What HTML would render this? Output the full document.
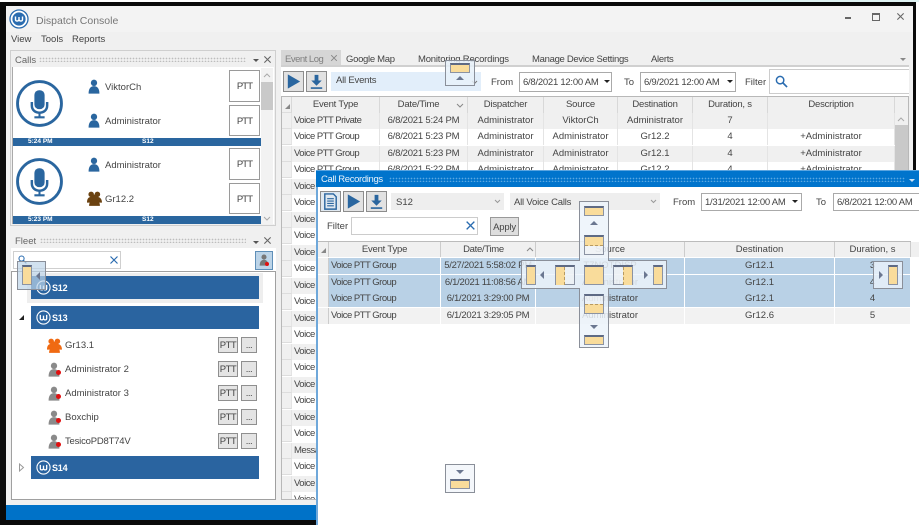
<!DOCTYPE html>
<html><head><meta charset="utf-8">
<style>
html,body{margin:0;padding:0;width:919px;height:525px;overflow:hidden;background:#fff}
#root{position:relative;width:919px;height:525px;overflow:hidden;background:#fff;font-family:"Liberation Sans",sans-serif;font-size:9.5px;color:#444;filter:blur(.35px)}
#root div,#root span.a,#root svg{position:absolute}
.t{position:absolute;white-space:nowrap;line-height:12px;transform:translateY(1px)}
.b{border:1px solid #a8a8a8;box-sizing:border-box;background:#fff}
.grip{height:5px;background-image:radial-gradient(#bdbdbd 0.7px,transparent 0.9px);background-size:3px 3px}
.ptt{border:1px solid #9a9a9a;box-sizing:border-box;background:#fff;text-align:center;color:#444;line-height:31px;font-size:9.5px;letter-spacing:-.9px}
.bar{background:#2a669f;color:#fff;font-size:6.5px;font-weight:bold;line-height:8px}
.bar span.a{top:0}
.sm{background:#e4e4e4;border:1px solid #8f8f8f;box-sizing:border-box;text-align:center;line-height:15px;font-size:9.5px;color:#444;letter-spacing:-.5px}
.blue{background:#2a64a0;color:#fff;font-weight:bold;font-size:9px;line-height:24px;letter-spacing:-.2px}
.blue span.a{top:0}
.tb{background:#e2e2e2;border:1px solid #8c8c8c;box-sizing:border-box}
.r{position:absolute;display:flex;height:16px;line-height:16px;white-space:nowrap}
.r span{display:block;flex:none;text-align:center;overflow:hidden;box-sizing:border-box;border-right:1px solid #e4e4e4}
.g span:nth-child(1){width:10px;background:#f0f0f0;border-bottom:1px solid #ddd}
.g span:nth-child(2){width:88px;text-align:left;padding-left:2px;letter-spacing:-.5px}
.g span:nth-child(3){width:88px;letter-spacing:-.2px}.g span:nth-child(4){width:76px}.g span:nth-child(5){width:74px}
.g span:nth-child(6){width:75px}.g span:nth-child(7){width:75px}.g span:nth-child(8){width:127px}
.gy{background:#f0f0f0}.wh{background:#fff}
.h span{text-align:center!important;padding:0!important;background:#f0f0f0;border-right:1px solid #d8d8d8;letter-spacing:-.2px!important}
.h span:nth-child(3){padding-right:10px!important}
.c span:nth-child(1){width:11px;background:#f0f0f0;border-right:1px solid #ccc}
.c span:nth-child(2){width:112px;text-align:left;padding-left:2px;letter-spacing:-.5px}
.c span:nth-child(3){width:95px;letter-spacing:-.3px}.c span:nth-child(4){width:149px}.c span:nth-child(5){width:150px}.c span:nth-child(6){width:76px}
.c span{border-right:1px solid #fff}
.sel{background:#b9d1e6}
.guide{background:rgba(232,241,249,.85);border:1px solid #8a8f99;box-sizing:border-box}
.tile{background:#f9dc9b;border:1px solid #8b93a3;border-top:2px solid #5e6a84;box-sizing:border-box}
.half{background:rgba(243,243,243,.5);border:1px solid #8b93a3;border-top:2px solid #5e6a84;box-sizing:border-box}
.half i{position:absolute;background:#f9dc9b;display:block}
</style></head>
<body><div id="root">
<svg width="0" height="0" style="position:absolute">
<defs>
<symbol id="p" viewBox="0 0 14 18"><circle cx="7" cy="4.6" r="3.8"/><path d="M.5 17.500C.5 11.500 3 8.600 7 8.600S13.500 11.500 13.500 17.500Z"/></symbol>
<symbol id="gr" viewBox="0 0 18 18"><circle cx="5" cy="4" r="3.300"/><circle cx="12.500" cy="4" r="3.300"/><path d="M0 14C0 9 2 7 5 7S9 9 10 14ZM8 14C9 9 10 7 12.500 7S18 9 18 14Z"/><circle cx="9" cy="7.500" r="3.300"/><path d="M2.500 17.800C2.500 13 5 10.500 9 10.500S15.500 13 15.500 17.800Z"/></symbol>
<symbol id="mic" viewBox="0 0 46 46"><circle cx="23" cy="23" r="21.500" fill="none" stroke="#2a669f" stroke-width="2.800"/><rect x="18" y="10" width="10" height="18.500" rx="4.500" fill="#2a669f"/><path d="M15.500 21.500v3.500c0 4.500 3.400 7 7.500 7s7.500-2.500 7.500-7v-3.500" fill="none" stroke="#2a669f" stroke-width="2.400"/><path d="M23 32v3.500M18 36.500h10" fill="none" stroke="#2a669f" stroke-width="2"/></symbol>
<symbol id="lg" viewBox="0 0 16 16"><circle cx="8" cy="8" r="7" fill="none" stroke="#fff" stroke-width="1.200"/><path d="M4.600 5.200v3.800c0 2 2.600 2 3.400 .3c.8 1.700 3.400 1.700 3.400-.3V5.200M8 6v3" fill="none" stroke="#fff" stroke-width="1.400"/></symbol>
<symbol id="x" viewBox="0 0 10 10"><path d="M1.500 1.500l7 7M8.500 1.500l-7 7" fill="none" stroke="currentColor" stroke-width="1.200"/></symbol>
<symbol id="play" viewBox="0 0 20 20"><path d="M4 2.500l13 7.500-13 7.500Z" fill="#2a669f"/></symbol>
<symbol id="dl" viewBox="0 0 20 20"><path d="M8 3h4v6h3.500L10 14.500 4.500 9H8ZM4 16h12v1.800H4Z" fill="#2a669f"/></symbol>
<symbol id="doc" viewBox="0 0 20 20"><path d="M4 2h9l3 3v13H4Z" fill="none" stroke="#2a669f" stroke-width="1.500"/><path d="M6.500 7h7M6.500 9.500h7M6.500 12h7M6.500 14.500h7" stroke="#2a669f" stroke-width="1.200"/></symbol>
<symbol id="mag" viewBox="0 0 14 14"><circle cx="5.500" cy="5.500" r="4" fill="none" stroke="#2a6cb0" stroke-width="1.600"/><path d="M8.500 8.500l4.500 4.500" stroke="#2a6cb0" stroke-width="1.800"/></symbol>
</defs></svg>

<!-- outer frame -->
<div style="left:0;top:2px;width:916px;height:4px;background:#0a0a0a"></div>
<div style="left:0;top:2px;width:6px;height:523px;background:#0a0a0a"></div>
<div style="left:913px;top:2px;width:3px;height:170px;background:#0a0a0a"></div>
<div style="left:0;top:520px;width:320px;height:5px;background:#0a0a0a"></div>
<div style="left:700px;top:0;width:219px;height:2px;background:#dff3f3"></div>
<div style="left:6px;top:6px;width:907px;height:499px;background:#f0f0f0"></div>
<div style="left:6px;top:6px;width:907px;height:26px;background:#f3f3f3"></div>
<div style="left:6px;top:505px;width:312px;height:15px;background:#0072c8"></div>

<!-- title -->
<svg style="left:9px;top:9px" width="20" height="20" viewBox="0 0 20 20"><circle cx="10" cy="10" r="9" fill="#fff" stroke="#2a6cb0" stroke-width="1.300"/><circle cx="10" cy="10" r="6.600" fill="#2a6cb0"/><path d="M6.500 7.500v3c0 2 2.700 2 3.500 .3c.8 1.700 3.500 1.700 3.500-.3v-3M10 8v3" fill="none" stroke="#fff" stroke-width="1.400"/></svg>
<span class="t" style="left:36px;top:14px;font-size:10.500px;color:#777">Dispatch Console</span>
<span class="t" style="left:11px;top:33px;color:#444">View</span>
<span class="t" style="left:41px;top:33px;color:#444">Tools</span>
<span class="t" style="left:72px;top:33px;color:#444">Reports</span>
<div style="left:845px;top:17px;width:6px;height:2px;background:#666"></div>
<div style="left:872px;top:13px;width:6px;height:5px;border:1px solid #666;border-top:2px solid #666;box-sizing:content-box"></div>
<svg style="left:896px;top:12px;color:#666" width="9" height="9"><use href="#x"/></svg>

<!-- calls panel -->
<div style="left:10px;top:50px;width:266px;height:176px;border:1px solid #cfcfcf;box-sizing:border-box;background:#f0f0f0"></div>
<span class="t" style="left:15px;top:54px;color:#666">Calls</span>
<div class="grip" style="left:39px;top:57px;width:207px"></div>
<div style="left:253px;top:59px;border-left:3px solid transparent;border-right:3px solid transparent;border-top:3px solid #555;width:0;height:0"></div>
<svg style="left:263px;top:55px;color:#666" width="9" height="9"><use href="#x"/></svg>
<div style="left:12px;top:67px;width:261px;height:157px;background:#fff;border-left:1px solid #aaa"></div>

<svg style="left:16px;top:80px" width="47" height="47"><use href="#mic"/></svg>
<svg style="left:16px;top:158px" width="47" height="47"><use href="#mic"/></svg>
<svg style="left:88px;top:79px;fill:#2a669f" width="12" height="15"><use href="#p"/></svg>
<svg style="left:88px;top:113px;fill:#2a669f" width="12" height="15"><use href="#p"/></svg>
<svg style="left:88px;top:157px;fill:#2a669f" width="12" height="15"><use href="#p"/></svg>
<svg style="left:87px;top:191px;fill:#6b4210" width="15" height="15"><use href="#gr"/></svg>
<span class="t" style="left:105px;top:81px">ViktorCh</span>
<span class="t" style="left:105px;top:115px">Administrator</span>
<span class="t" style="left:105px;top:159px">Administrator</span>
<span class="t" style="left:105px;top:193px">Gr12.2</span>
<div class="ptt" style="left:229px;top:70px;width:31px;height:32px">PTT</div>
<div class="ptt" style="left:229px;top:105px;width:31px;height:31px">PTT</div>
<div class="ptt" style="left:229px;top:148px;width:31px;height:32px">PTT</div>
<div class="ptt" style="left:229px;top:183px;width:31px;height:31px">PTT</div>
<div class="bar" style="left:13px;top:138px;width:248px;height:8px"><span class="a" style="left:15px">5:24 PM</span><span class="a" style="left:129px">S12</span></div>
<div class="bar" style="left:13px;top:216px;width:248px;height:8px"><span class="a" style="left:15px">5:23 PM</span><span class="a" style="left:129px">S12</span></div>
<div style="left:261px;top:68px;width:12px;height:156px;background:#f2f2f2"></div>
<div style="left:261px;top:82px;width:12px;height:28px;background:#c9c9c9"></div>
<svg style="left:263px;top:72px" width="8" height="6"><path d="M1 5l3-3 3 3" fill="none" stroke="#aaa"/></svg>
<svg style="left:263px;top:216px" width="8" height="6"><path d="M1 1l3 3 3-3" fill="none" stroke="#aaa"/></svg>

<!-- fleet panel -->
<span class="t" style="left:15px;top:235px;color:#666">Fleet</span>
<div class="grip" style="left:40px;top:238px;width:206px"></div>
<div style="left:253px;top:241px;border-left:3px solid transparent;border-right:3px solid transparent;border-top:3px solid #555;width:0;height:0"></div>
<svg style="left:263px;top:236px;color:#666" width="9" height="9"><use href="#x"/></svg>
<div style="left:11px;top:248px;width:265px;height:23px;background:#fff"></div>
<div class="b" style="left:13px;top:251px;width:108px;height:18px;border-color:#cfcfcf"></div>
<svg style="left:18px;top:255px" width="9" height="9"><use href="#mag"/></svg>
<svg style="left:109px;top:255px;color:#2a6cb0" width="10" height="10"><use href="#x"/></svg>
<div style="left:255px;top:251px;width:18px;height:19px;background:#bcd4e8;border:1px solid #5f8fb8;box-sizing:border-box"></div>
<svg style="left:259px;top:254px;fill:#777" width="10" height="12"><use href="#p"/></svg>
<div style="left:265px;top:262px;width:4px;height:4px;border-radius:50%;background:#e01010"></div>
<div style="left:11px;top:271px;width:265px;height:229px;background:#fff;border:1px solid #a0a0a0;box-sizing:border-box"></div>
<div style="left:27px;top:273px;width:236px;height:30px;background:#eee"></div>
<div class="blue" style="left:31px;top:276px;width:228px;height:23px"><span class="a" style="left:21px">S12</span></div>
<svg style="left:36px;top:280px" width="15" height="15"><use href="#lg"/></svg>
<div class="blue" style="left:31px;top:306px;width:228px;height:23px"><span class="a" style="left:21px">S13</span></div>
<svg style="left:36px;top:310px" width="15" height="15"><use href="#lg"/></svg>
<div class="blue" style="left:31px;top:456px;width:228px;height:23px"><span class="a" style="left:21px">S14</span></div>
<svg style="left:36px;top:460px" width="15" height="15"><use href="#lg"/></svg>
<svg style="left:18px;top:314px" width="7" height="7"><path d="M6 1v5H1Z" fill="#222"/></svg>
<svg style="left:18px;top:463px" width="7" height="9"><path d="M1.500 1l4 3.500-4 3.500Z" fill="#fff" stroke="#999"/></svg>

<svg style="left:47px;top:338px;fill:#f06a12" width="15" height="15"><use href="#gr"/></svg>
<svg style="left:48px;top:362px;fill:#8a8a8a" width="12" height="15"><use href="#p"/></svg>
<svg style="left:48px;top:386px;fill:#8a8a8a" width="12" height="15"><use href="#p"/></svg>
<svg style="left:48px;top:410px;fill:#8a8a8a" width="12" height="15"><use href="#p"/></svg>
<svg style="left:48px;top:434px;fill:#8a8a8a" width="12" height="15"><use href="#p"/></svg>
<div style="left:56px;top:370px;width:5px;height:5px;border-radius:50%;background:#e01010"></div>
<div style="left:56px;top:394px;width:5px;height:5px;border-radius:50%;background:#e01010"></div>
<div style="left:56px;top:418px;width:5px;height:5px;border-radius:50%;background:#e01010"></div>
<div style="left:56px;top:442px;width:5px;height:5px;border-radius:50%;background:#e01010"></div>
<span class="t" style="left:65px;top:339px">Gr13.1</span>
<span class="t" style="left:65px;top:363px">Administrator 2</span>
<span class="t" style="left:65px;top:387px">Administrator 3</span>
<span class="t" style="left:65px;top:411px">Boxchip</span>
<span class="t" style="left:65px;top:435px;letter-spacing:-.2px">TesicoPD8T74V</span>
<div class="sm" style="left:218px;top:337px;width:20px;height:16px">PTT</div><div class="sm" style="left:241px;top:337px;width:16px;height:16px">...</div>
<div class="sm" style="left:218px;top:361px;width:20px;height:16px">PTT</div><div class="sm" style="left:241px;top:361px;width:16px;height:16px">...</div>
<div class="sm" style="left:218px;top:385px;width:20px;height:16px">PTT</div><div class="sm" style="left:241px;top:385px;width:16px;height:16px">...</div>
<div class="sm" style="left:218px;top:409px;width:20px;height:16px">PTT</div><div class="sm" style="left:241px;top:409px;width:16px;height:16px">...</div>
<div class="sm" style="left:218px;top:433px;width:20px;height:16px">PTT</div><div class="sm" style="left:241px;top:433px;width:16px;height:16px">...</div>

<!-- right tabs -->
<div style="left:281px;top:50px;width:60px;height:16px;background:#d6d6d6"></div>
<span class="t" style="left:285px;top:53px;color:#808080;letter-spacing:-.5px">Event Log</span>
<svg style="left:330px;top:54px;color:#888" width="8" height="8"><use href="#x"/></svg>
<span class="t" style="left:346px;top:53px;letter-spacing:-.3px">Google Map</span>
<span class="t" style="left:418px;top:53px;letter-spacing:-.2px">Monitoring Recordings</span>
<span class="t" style="left:532px;top:53px;letter-spacing:-.3px">Manage Device Settings</span>
<span class="t" style="left:651px;top:53px;letter-spacing:-.3px">Alerts</span>
<div style="left:900px;top:58px;border-left:3px solid transparent;border-right:3px solid transparent;border-top:3px solid #888;width:0;height:0"></div>
<div style="left:281px;top:65px;width:628px;height:2px;background:#d0d0d0"></div>
<div style="left:281px;top:67px;width:628px;height:29px;background:#fff"></div>
<div class="tb" style="left:283px;top:71px;width:21px;height:21px"></div><svg style="left:284px;top:72px" width="19" height="19"><use href="#play"/></svg>
<div class="tb" style="left:306px;top:71px;width:21px;height:21px"></div><svg style="left:307px;top:72px" width="19" height="19"><use href="#dl"/></svg>
<div style="left:331px;top:72px;width:150px;height:19px;background:#e2eefa"></div>
<span class="t" style="left:336px;top:74px;letter-spacing:-.2px">All Events</span>
<svg style="left:471px;top:80px" width="7" height="5"><path d="M1 1l2.500 2.500L6 1" fill="none" stroke="#777"/></svg>
<span class="t" style="left:491px;top:76px">From</span>
<div class="b" style="left:519px;top:72px;width:93px;height:20px;border-color:#aaa"></div>
<span class="t" style="left:523px;top:76px;letter-spacing:-.25px">6/8/2021 12:00 AM</span>
<div style="left:604px;top:80px;border-left:3px solid transparent;border-right:3px solid transparent;border-top:3px solid #222;width:0;height:0"></div>
<span class="t" style="left:624px;top:76px">To</span>
<div class="b" style="left:640px;top:72px;width:96px;height:20px;border-color:#aaa"></div>
<span class="t" style="left:644px;top:76px;letter-spacing:-.25px">6/9/2021 12:00 AM</span>
<div style="left:727px;top:80px;border-left:3px solid transparent;border-right:3px solid transparent;border-top:3px solid #222;width:0;height:0"></div>
<span class="t" style="left:745px;top:76px">Filter</span>
<div style="left:769px;top:69px;width:140px;height:25px;background:#fff;border:1px solid #ccc;border-right:0;box-sizing:border-box"></div>
<svg style="left:775px;top:75px" width="13" height="13"><use href="#mag"/></svg>

<!-- event grid -->
<div style="left:281px;top:96px;width:628px;height:404px;border:1px solid #b8b8b8;box-sizing:border-box;overflow:hidden;background:#fff">
<div class="r g h" style="left:0;top:0;height:16px"><span></span><span>Event Type</span><span>Date/Time</span><span>Dispatcher</span><span>Source</span><span>Destination</span><span>Duration, s</span><span>Description</span></div>
<svg style="left:2px;top:6px" width="7" height="7"><path d="M6 1v5H1Z" fill="#888"/></svg>
<svg style="left:174px;top:6px" width="8" height="5"><path d="M1 1l3 3 3-3" fill="none" stroke="#888"/></svg>
<div class="r g gy" style="left:0;top:15.500px"><span></span><span>Voice PTT Private</span><span>6/8/2021 5:24 PM</span><span>Administrator</span><span>ViktorCh</span><span>Administrator</span><span>7</span><span></span></div>
<div class="r g wh" style="left:0;top:32px"><span></span><span>Voice PTT Group</span><span>6/8/2021 5:23 PM</span><span>Administrator</span><span>Administrator</span><span>Gr12.2</span><span>4</span><span>+Administrator</span></div>
<div class="r g gy" style="left:0;top:48.500px"><span></span><span>Voice PTT Group</span><span>6/8/2021 5:23 PM</span><span>Administrator</span><span>Administrator</span><span>Gr12.1</span><span>4</span><span>+Administrator</span></div>
<div class="r g wh" style="left:0;top:65px"><span></span><span>Voice PTT Group</span><span>6/8/2021 5:22 PM</span><span>Administrator</span><span>Administrator</span><span>Gr12.2</span><span>4</span><span>+Administrator</span></div>
<div class="r g gy" style="left:0;top:81.500px"><span></span><span>Voice PTT</span></div>
<div class="r g wh" style="left:0;top:98px"><span></span><span>Voice PTT</span></div>
<div class="r g gy" style="left:0;top:114.500px"><span></span><span>Voice PTT</span></div>
<div class="r g wh" style="left:0;top:131px"><span></span><span>Voice PTT</span></div>
<div class="r g gy" style="left:0;top:147.500px"><span></span><span>Voice PTT</span></div>
<div class="r g wh" style="left:0;top:164px"><span></span><span>Voice PTT</span></div>
<div class="r g gy" style="left:0;top:180.500px"><span></span><span>Voice PTT</span></div>
<div class="r g wh" style="left:0;top:197px"><span></span><span>Voice PTT</span></div>
<div class="r g gy" style="left:0;top:213.500px"><span></span><span>Voice PTT</span></div>
<div class="r g wh" style="left:0;top:230px"><span></span><span>Voice PTT</span></div>
<div class="r g gy" style="left:0;top:246.500px"><span></span><span>Voice PTT</span></div>
<div class="r g wh" style="left:0;top:263px"><span></span><span>Voice PTT</span></div>
<div class="r g gy" style="left:0;top:279.500px"><span></span><span>Voice PTT</span></div>
<div class="r g wh" style="left:0;top:296px"><span></span><span>Voice PTT</span></div>
<div class="r g gy" style="left:0;top:312.500px"><span></span><span>Voice PTT</span></div>
<div class="r g wh" style="left:0;top:329px"><span></span><span>Voice PTT</span></div>
<div class="r g gy" style="left:0;top:345.500px"><span></span><span>Message</span></div>
<div class="r g wh" style="left:0;top:362px"><span></span><span>Voice PTT</span></div>
<div class="r g gy" style="left:0;top:378.500px"><span></span><span>Voice PTT</span></div>
<div class="r g wh" style="left:0;top:395px"><span></span><span>Voice PTT</span></div>
</div>
<div style="left:895px;top:97px;width:13px;height:75px;background:#f0f0f0"></div>
<div style="left:895px;top:125px;width:13px;height:47px;background:#c9c9c9"></div>
<svg style="left:897px;top:116px" width="8" height="6"><path d="M1 5l3-3 3 3" fill="none" stroke="#aaa"/></svg>

<!-- call recordings window -->
<div style="left:316px;top:170px;width:603px;height:355px;background:#fff;border-left:2px solid #6fa8da;box-sizing:border-box"></div>
<div style="left:316px;top:170px;width:603px;height:17px;background:#0074cc;border-top:1px solid #5aa5e0;box-sizing:border-box"></div>
<span class="t" style="left:321px;top:173px;color:#e8f2fb;letter-spacing:-.35px">Call Recordings</span>
<div class="grip" style="left:389px;top:177px;width:516px;background-image:radial-gradient(#5aa8e2 0.7px,transparent 0.9px)"></div>
<div style="left:909px;top:179px;border-left:3px solid transparent;border-right:3px solid transparent;border-top:3px solid #cfe4f6;width:0;height:0"></div>

<div class="tb" style="left:320px;top:191px;width:21px;height:21px;background:#dfe8f0"></div><svg style="left:321px;top:192px" width="19" height="19"><use href="#doc"/></svg>
<div class="tb" style="left:343px;top:191px;width:21px;height:21px"></div><svg style="left:344px;top:192px" width="19" height="19"><use href="#play"/></svg>
<div class="tb" style="left:366px;top:191px;width:21px;height:21px"></div><svg style="left:367px;top:192px" width="19" height="19"><use href="#dl"/></svg>
<div style="left:391px;top:193px;width:113px;height:17px;background:#eee"></div>
<span class="t" style="left:396px;top:196px">S12</span>
<svg style="left:494px;top:199px" width="7" height="5"><path d="M1 1l2.500 2.500L6 1" fill="none" stroke="#999"/></svg>
<div style="left:510px;top:193px;width:150px;height:17px;background:#eee"></div>
<span class="t" style="left:514px;top:196px;letter-spacing:-.2px">All Voice Calls</span>
<svg style="left:650px;top:199px" width="7" height="5"><path d="M1 1l2.500 2.500L6 1" fill="none" stroke="#999"/></svg>
<span class="t" style="left:673px;top:196px">From</span>
<div class="b" style="left:701px;top:193px;width:101px;height:18px;border-color:#aaa"></div>
<span class="t" style="left:705px;top:196px;letter-spacing:-.25px">1/31/2021 12:00 AM</span>
<div style="left:792px;top:200px;border-left:3px solid transparent;border-right:3px solid transparent;border-top:3px solid #222;width:0;height:0"></div>
<span class="t" style="left:816px;top:196px">To</span>
<div class="b" style="left:833px;top:193px;width:90px;height:18px;border-color:#aaa"></div>
<span class="t" style="left:837px;top:196px;letter-spacing:-.25px">6/8/2021 12:00 AM</span>
<span class="t" style="left:327px;top:220px">Filter</span>
<div class="b" style="left:351px;top:217px;width:127px;height:18px;border-color:#ccc"></div>
<svg style="left:465px;top:220px;color:#2a6cb0" width="11" height="11"><use href="#x"/></svg>
<div style="left:490px;top:217px;width:29px;height:19px;background:#dedede;border:1px solid #999;box-sizing:border-box;text-align:center;line-height:19px;color:#444;letter-spacing:-.2px">Apply</div>

<div style="left:318px;top:241px;width:593px;height:1px;background:#bbb"></div>
<div class="r c" style="left:318px;top:242px;height:15px;line-height:15px;background:#f0f0f0"><span style="border-right:1px solid #ccc"></span><span style="text-align:center;padding:0;border-right:1px solid #ccc;letter-spacing:-.2px">Event Type</span><span style="border-right:1px solid #ccc;padding-right:9px">Date/Time</span><span style="border-right:1px solid #ccc">Source</span><span style="border-right:1px solid #ccc">Destination</span><span style="border-right:1px solid #ccc">Duration, s</span></div>
<div style="left:911px;top:242px;width:8px;height:15px;background:#f0f0f0"></div>
<svg style="left:320px;top:247px" width="7" height="7"><path d="M6 1v5H1Z" fill="#888"/></svg>
<svg style="left:526px;top:247px" width="8" height="5"><path d="M1 4l3-3 3 3" fill="none" stroke="#888"/></svg>
<div class="r c sel" style="left:318px;top:258px"><span></span><span>Voice PTT Group</span><span>5/27/2021 5:58:02 PM</span><span>T7NOTDISP</span><span>Gr12.1</span><span>3</span></div>
<div class="r c sel" style="left:318px;top:274.500px"><span></span><span>Voice PTT Group</span><span>6/1/2021 11:08:56 AM</span><span>Administrator</span><span>Gr12.1</span><span>4</span></div>
<div class="r c sel" style="left:318px;top:291px"><span></span><span>Voice PTT Group</span><span>6/1/2021 3:29:00 PM</span><span>Administrator</span><span>Gr12.1</span><span>4</span></div>
<div class="r c" style="left:318px;top:307.500px;background:#f2f2f2"><span></span><span>Voice PTT Group</span><span>6/1/2021 3:29:05 PM</span><span>Administrator</span><span>Gr12.6</span><span>5</span></div>

<!-- dock guides: cross -->
<svg style="left:520px;top:200px" width="149" height="149"><path d="M59.500 1.500h29v59h58v28h-58v59h-29v-59h-58v-28h58Z" fill="rgba(236,243,250,.84)" stroke="#8a8f99"/></svg>
<div class="tile" style="left:584px;top:206px;width:20px;height:10px"></div>
<svg style="left:590px;top:220px" width="8" height="5"><path d="M0 5l4-4 4 4Z" fill="#6b7790"/></svg>
<div class="half" style="left:584px;top:235px;width:20px;height:20px"><i style="left:0;top:0;width:18px;height:8px;border-bottom:1px dashed #b89a60"></i></div>
<div class="tile" style="left:584px;top:265px;width:20px;height:20px"></div>
<div class="half" style="left:584px;top:294px;width:20px;height:20px"><i style="left:0;bottom:0;width:18px;height:8px;border-top:1px dashed #b89a60"></i></div>
<svg style="left:590px;top:325px" width="8" height="5"><path d="M0 0l4 4 4-4Z" fill="#6b7790"/></svg>
<div class="tile" style="left:584px;top:335px;width:20px;height:10px"></div>
<div class="tile" style="left:526px;top:265px;width:10px;height:20px"></div>
<svg style="left:539px;top:271px" width="5" height="8"><path d="M5 0L1 4l4 4Z" fill="#6b7790"/></svg>
<div class="half" style="left:555px;top:265px;width:20px;height:20px"><i style="left:0;top:0;width:8px;height:18px;border-right:1px dashed #b89a60"></i></div>
<div class="half" style="left:613px;top:265px;width:20px;height:20px"><i style="right:0;top:0;width:8px;height:18px;border-left:1px dashed #b89a60"></i></div>
<svg style="left:644px;top:271px" width="5" height="8"><path d="M0 0l4 4-4 4Z" fill="#6b7790"/></svg>
<div class="tile" style="left:653px;top:265px;width:10px;height:20px"></div>

<!-- dock guide: top -->
<div class="guide" style="left:445px;top:60px;width:30px;height:26px"></div>
<div class="tile" style="left:450px;top:63px;width:20px;height:10px"></div>
<svg style="left:456px;top:75px" width="8" height="5"><path d="M0 5l4-4 4 4Z" fill="#6b7790"/></svg>
<!-- dock guide: bottom -->
<div class="guide" style="left:445px;top:464px;width:30px;height:29px;background:#f4f7fb"></div>
<svg style="left:456px;top:470px" width="8" height="5"><path d="M0 0l4 4 4-4Z" fill="#6b7790"/></svg>
<div class="tile" style="left:450px;top:479px;width:20px;height:10px"></div>
<!-- dock guide: right -->
<div class="guide" style="left:873px;top:261px;width:30px;height:28px"></div>
<svg style="left:879px;top:271px" width="5" height="8"><path d="M0 0l4 4-4 4Z" fill="#6b7790"/></svg>
<div class="tile" style="left:888px;top:265px;width:10px;height:20px"></div>
<!-- dock guide: left -->
<div class="guide" style="left:17px;top:261px;width:29px;height:29px;background:rgba(190,212,232,.7)"></div>
<div class="tile" style="left:22px;top:265px;width:10px;height:20px"></div>
<svg style="left:35px;top:272px" width="5" height="8"><path d="M5 0L1 4l4 4Z" fill="#6b7790"/></svg>
</div></body></html>
